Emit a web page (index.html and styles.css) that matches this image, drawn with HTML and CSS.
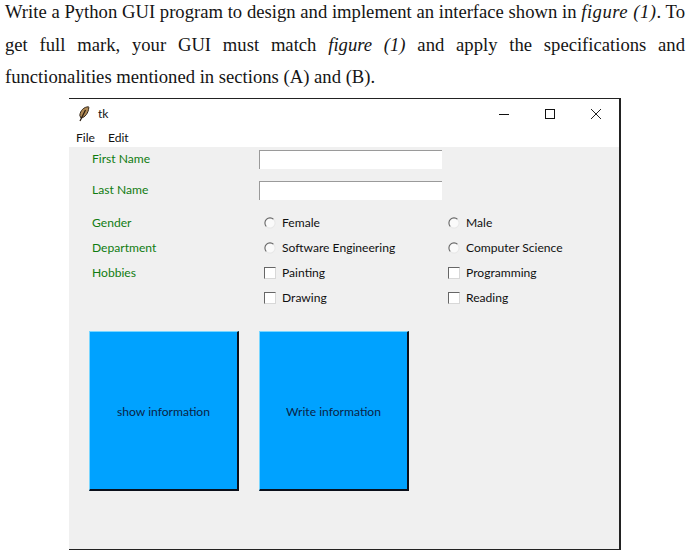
FILE: index.html
```html
<!DOCTYPE html>
<html lang="en">
<head>
<meta charset="utf-8">
<title>tk</title>
<link rel="stylesheet" href="styles.css">
</head>
<body>
<svg class="defs" width="0" height="0" aria-hidden="true">
  <symbol id="radio" viewBox="0 0 13 13">
    <circle cx="6.500" cy="6.500" r="5.500" fill="#fafafa"/>
    <path d="M2.600 10.400A5.500 5.500 0 0 1 10.400 2.600" fill="none" stroke="#666" stroke-width="1.200"/>
    <path d="M10.400 2.600A5.500 5.500 0 0 1 2.600 10.400" fill="none" stroke="#e8e8e8" stroke-width="1.200"/>
  </symbol>
</svg>
<p class="question">
  <span class="line">Write a Python GUI program to design and implement an interface shown in <em class="wide">figure (1)</em>. To</span>
  <span class="line">get full mark, your GUI must match <em>figure (1)</em> and apply the specifications and</span>
  <span class="line last">functionalities mentioned in sections (A) and (B).</span>
</p>
<div class="window">
  <div class="titlebar">
    <svg class="feather" width="12" height="16" viewBox="0 0 12 16" aria-hidden="true">
      <path d="M10.500 0.800C6 0.800 2.200 4.500 1.800 9.500L3 12C7 11.500 10.500 7 10.800 1.500Z" fill="#b08a55" stroke="#33261a" stroke-width="1"/>
      <path d="M7.500 4L2 15" fill="none" stroke="#2a1d10" stroke-width="1.200"/>
    </svg>
    <span class="title">tk</span>
    <div class="controls">
      <svg width="12" height="12" viewBox="0 0 12 12" aria-hidden="true"><path d="M1 6.500H11" stroke="#111" stroke-width="1"/></svg>
      <svg width="12" height="12" viewBox="0 0 12 12" aria-hidden="true"><rect x="1.500" y="1.500" width="9" height="9" fill="none" stroke="#111" stroke-width="1"/></svg>
      <svg width="12" height="12" viewBox="0 0 12 12" aria-hidden="true"><path d="M1 1L11 11M11 1L1 11" stroke="#222" stroke-width="1"/></svg>
    </div>
  </div>
  <div class="menubar"><span>File</span><span>Edit</span></div>
  <div class="content">
    <div class="names">
      <label class="field">First Name</label><div class="entry"></div>
      <label class="field">Last Name</label><div class="entry"></div>
    </div>
    <div class="choices">
      <span class="field">Gender</span>
      <span class="option"><svg class="mark"><use href="#radio"/></svg>Female</span>
      <span class="option"><svg class="mark"><use href="#radio"/></svg>Male</span>
      <span class="field">Department</span>
      <span class="option"><svg class="mark"><use href="#radio"/></svg>Software Engineering</span>
      <span class="option"><svg class="mark"><use href="#radio"/></svg>Computer Science</span>
      <span class="field">Hobbies</span>
      <span class="option"><i class="check"></i>Painting</span>
      <span class="option"><i class="check"></i>Programming</span>
      <span></span>
      <span class="option"><i class="check"></i>Drawing</span>
      <span class="option"><i class="check"></i>Reading</span>
    </div>
    <div class="actions">
      <button class="action" type="button">show information</button>
      <button class="action" type="button">Write information</button>
    </div>
  </div>
</div>
</body>
</html>
```
FILE: styles.css
```css
html, body {
  margin: 0;
  padding: 0;
  background: #fff;
}
body {
  width: 690px;
  height: 554px;
  overflow: hidden;
  font-family: Lato, "Noto Sans", sans-serif;
  font-size: 12.1px;
  color: #111;
}
.defs { position: absolute; }
.question {
  margin: 0;
  padding: 0 5px;
  height: 98px;
  box-sizing: border-box;
  font-family: "Liberation Serif", serif;
  font-size: 18.65px;
  line-height: 32.5px;
  color: #151515;
}
.line {
  display: block;
  height: 32.5px;
  position: relative;
  top: -4px;
  white-space: nowrap;
  text-align: justify;
  text-align-last: justify;
}
.line.last { text-align-last: left; }
.wide { letter-spacing: 0.5px; }
.window {
  margin-left: 69px;
  width: 552px;
  height: 452px;
  box-sizing: border-box;
  border-top: 1px solid #222;
  border-right: 2px solid #222;
  border-bottom: 1px solid #222;
  display: flex;
  flex-direction: column;
}
.titlebar {
  height: 29px;
  display: flex;
  align-items: center;
  padding-left: 9px;
  flex: none;
}
.feather { margin-right: 8px; }
.controls {
  margin-left: auto;
  display: flex;
  gap: 34px;
  padding-right: 17px;
}
.controls svg { display: block; }
.menubar {
  height: 19px;
  flex: none;
  display: flex;
  align-items: center;
  gap: 13px;
  padding-left: 7px;
  box-sizing: border-box;
}
.content {
  flex: 1;
  background: #f0f0f0;
  padding: 3px 0 0 20px;
}
.names {
  display: grid;
  grid-template-columns: 170px 183px;
  grid-auto-rows: 19px;
  row-gap: 12px;
  align-items: center;
}
.field {
  color: #107c10;
  padding: 0 0 2px 3px;
}
.entry {
  height: 19px;
  box-sizing: border-box;
  background: #fff;
  border-top: 1px solid #9a9a9a;
  border-left: 1px solid #9a9a9a;
}
.choices {
  display: grid;
  grid-template-columns: 175px 184px 1fr;
  grid-auto-rows: 25px;
  align-items: center;
  margin-top: 11px;
}
.option {
  display: flex;
  align-items: center;
  gap: 6px;
  padding-bottom: 2px;
}
.mark {
  width: 12px;
  height: 12px;
  flex: none;
}
.check {
  width: 12px;
  height: 12px;
  box-sizing: border-box;
  flex: none;
  background: #fff;
  border-top: 1px solid #666;
  border-left: 1px solid #666;
  border-right: 1px solid #d8d8d8;
  border-bottom: 1px solid #d8d8d8;
}
.actions {
  display: flex;
  gap: 20px;
  margin-top: 20px;
}
.action {
  width: 150px;
  height: 160px;
  padding: 2px 0 0;
  box-sizing: border-box;
  background: #00a2ff;
  border-style: solid;
  border-width: 1px 2px 2px 1px;
  border-color: #7ad6ff #0a0f1a #0a0f1a #7ad6ff;
  font: inherit;
  color: #0a2447;
}
```
